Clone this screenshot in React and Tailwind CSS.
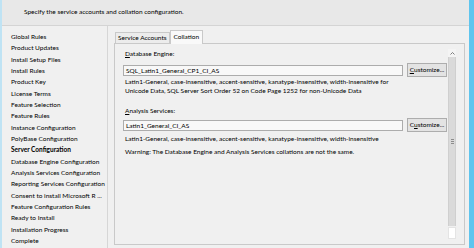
export default function App() {
  const nav = [
    "Global Rules",
    "Product Updates",
    "Install Setup Files",
    "Install Rules",
    "Product Key",
    "License Terms",
    "Feature Selection",
    "Feature Rules",
    "Instance Configuration",
    "PolyBase Configuration",
    "Server Configuration",
    "Database Engine Configuration",
    "Analysis Services Configuration",
    "Reporting Services Configuration",
    "Consent to install Microsoft R ...",
    "Feature Configuration Rules",
    "Ready to Install",
    "Installation Progress",
    "Complete",
  ];
  return (
    <div
      className="w-[474px] h-[248px] flex bg-[#f0f0f0] text-black overflow-hidden text-[6.5px]"
      style={{ fontFamily: 'Lato, "Noto Sans", sans-serif' }}
    >
      <div className="w-[2px] h-full bg-[#bfe3f4]" />
      <div className="flex-1 flex flex-col">
        <div className="h-[26px] bg-[#e8e8e8] border-b border-[#d4d4d4] flex items-center pl-[22px] pb-[2px]">
          Specify the service accounts and collation configuration.
        </div>
        <div className="flex-1 flex">
          <div className="w-[106px] border-r border-[#d6d6d6] pl-[9px] pt-[5px] flex flex-col">
            {nav.map((n) => (
              <div
                key={n}
                className={`h-[11.33px] leading-[11.33px] whitespace-nowrap ${
                  n === "Server Configuration" ? "font-bold" : ""
                }`}
              >
                {n}
              </div>
            ))}
          </div>
          <div className="flex-1 pl-[6px] pt-[4px] pr-[4px] pb-[3px] flex flex-col">
            <div className="flex items-end h-[13px] pl-[1px] relative z-10">
              <div className="h-[11px] px-[2px] border border-b-0 border-[#c9c9c9] bg-[#ececec] flex items-center leading-none">
                Service Accounts
              </div>
              <div className="h-[14px] -mb-[1px] px-[3px] border border-b-0 border-[#c9c9c9] bg-[#f9f9f9] flex items-center leading-none">
                Collation
              </div>
            </div>
            <div className="flex-1 border border-[#c9c9c9] bg-[#f0f0f0] flex pl-[8px] pr-[8px] pt-[5px] pb-[5px]">
              <div className="flex-1 flex flex-col">
                <div className="pl-[2px] h-[10px] leading-[10px]">
                  <span className="underline">D</span>atabase Engine:
                </div>
                <div className="flex items-center mt-[4px] gap-[4px] h-[14px]">
                  <div className="w-[280px] h-[11px] border border-[#acacac] bg-[#f8f8f8] pl-[2px] leading-[9px]">
                    SQL_Latin1_General_CP1_CI_AS
                  </div>
                  <div className="w-[40px] h-[14px] border border-[#adadad] bg-[#e3e3e3] flex items-center justify-center leading-none">
                    <span>
                      <span className="underline">C</span>ustomize...
                    </span>
                  </div>
                </div>
                <div className="pl-[2px] mt-[1px] leading-[8.5px]">
                  Latin1-General, case-insensitive, accent-sensitive, kanatype-insensitive, width-insensitive for
                  <br />
                  Unicode Data, SQL Server Sort Order 52 on Code Page 1252 for non-Unicode Data
                </div>
                <div className="pl-[2px] mt-[11px] h-[10px] leading-[10px]">
                  <span className="underline">A</span>nalysis Services:
                </div>
                <div className="flex items-center mt-[2px] gap-[4px] h-[14px]">
                  <div className="w-[280px] h-[11px] border border-[#acacac] bg-[#f8f8f8] pl-[2px] leading-[9px]">
                    Latin1_General_CI_AS
                  </div>
                  <div className="w-[40px] h-[14px] border border-[#adadad] bg-[#e3e3e3] flex items-center justify-center leading-none">
                    <span>
                      C<span className="underline">u</span>stomize...
                    </span>
                  </div>
                </div>
                <div className="pl-[2px] mt-[2px] leading-[10px]">
                  Latin1-General, case-insensitive, accent-sensitive, kanatype-insensitive, width-insensitive
                </div>
                <div className="pl-[2px] mt-[3px] leading-[10px]">
                  Warning: The Database Engine and Analysis Services collations are not the same.
                </div>
              </div>
              <div className="w-[8px] flex flex-col ml-[1px]">
                <div className="h-[8px] bg-[#f4f4f4] flex items-center justify-center">
                  <svg width="5" height="3" viewBox="0 0 5 3">
                    <path d="M0.5 2.5 L2.5 0.5 L4.5 2.5" stroke="#606060" fill="none" strokeWidth="0.8" />
                  </svg>
                </div>
                <div className="flex-1 bg-[#dadada] border-x border-[#cfcfcf] flex items-center justify-center">
                  <div className="flex flex-col gap-[1px]">
                    <div className="w-[3px] h-[1px] bg-[#8c8c8c]" />
                    <div className="w-[3px] h-[1px] bg-[#8c8c8c]" />
                    <div className="w-[3px] h-[1px] bg-[#8c8c8c]" />
                  </div>
                </div>
                <div className="h-[12px] mt-[1px] bg-white border border-[#e4e4e4]" />
              </div>
            </div>
          </div>
        </div>
      </div>
      <div className="w-[5px] h-full bg-[#5fc5ee]" />
    </div>
  );
}
